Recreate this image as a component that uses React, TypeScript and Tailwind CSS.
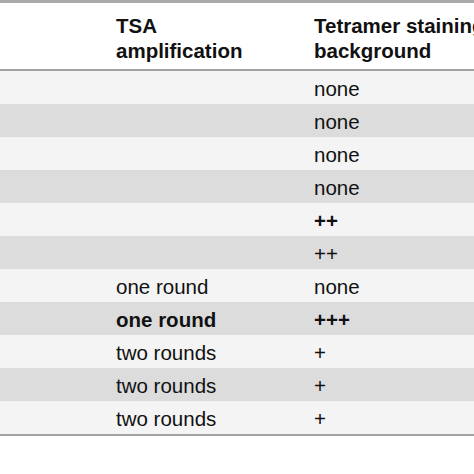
const rows: { tsa: string; bg: string; boldTsa?: boolean; boldBg?: boolean }[] = [
  { tsa: "", bg: "none" },
  { tsa: "", bg: "none" },
  { tsa: "", bg: "none" },
  { tsa: "", bg: "none" },
  { tsa: "", bg: "++", boldBg: true },
  { tsa: "", bg: "++" },
  { tsa: "one round", bg: "none" },
  { tsa: "one round", bg: "+++", boldTsa: true, boldBg: true },
  { tsa: "two rounds", bg: "+" },
  { tsa: "two rounds", bg: "+" },
  { tsa: "two rounds", bg: "+" },
];

export default function App() {
  return (
    <div
      className="w-[474px] h-[474px] overflow-hidden bg-white text-[#111] text-[20.5px]"
      style={{ fontFamily: '"Liberation Sans", Arial, sans-serif' }}
    >
      <div className="border-t-[3px] border-[#a9a9a9]" />
      <div className="flex h-[68px] border-b-[2px] border-[#a3a3a3] font-bold leading-[25px] pt-[10px]">
        <div className="w-[116px] shrink-0" />
        <div className="w-[198px] shrink-0">
          TSA
          <br />
          amplification
        </div>
        <div className="whitespace-nowrap">
          Tetramer staining
          <br />
          background
        </div>
      </div>
      {rows.map((r, i) => (
        <div
          key={i}
          className={`flex h-[33px] items-center pt-[3px] ${i % 2 === 0 ? "bg-[#f4f4f4]" : "bg-[#dcdcdd]"}`}
        >
          <div className="w-[116px] shrink-0" />
          <div className={`w-[198px] shrink-0 ${r.boldTsa ? "font-bold" : ""}`}>{r.tsa}</div>
          <div className={r.boldBg ? "font-bold" : ""}>{r.bg}</div>
        </div>
      ))}
      <div className="border-t-[2px] border-[#a3a3a3]" />
    </div>
  );
}
